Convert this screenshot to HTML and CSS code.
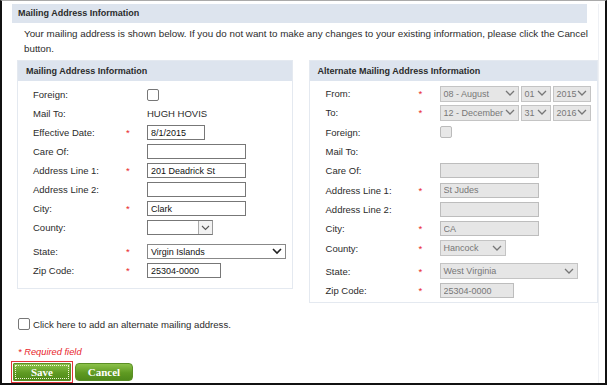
FILE: index.html
```html
<!DOCTYPE html>
<html lang="en">
<head>
  <meta charset="UTF-8">
  <title>Mailing Address Information</title>
  <link rel="stylesheet" href="styles.css">
</head>
<body>
  <div class="frame">
    <div class="page">
      <h2 class="page-title">Mailing Address Information</h2>
      <p class="intro">Your mailing address is shown below. If you do not want to make any changes to your existing information, please click the Cancel button.</p>

      <div class="panels">
        <section class="panel panel-main">
          <h3 class="panel-title">Mailing Address Information</h3>
          <div class="rows">
            <div class="row"><span class="label">Foreign:</span><span class="req"></span><span class="field"><span class="check"></span></span></div>
            <div class="row"><span class="label">Mail To:</span><span class="req"></span><span class="field value">HUGH HOVIS</span></div>
            <div class="row"><span class="label">Effective Date:</span><span class="req">*</span><span class="field"><input class="input w-date" value="8/1/2015"></span></div>
            <div class="row"><span class="label">Care Of:</span><span class="req"></span><span class="field"><input class="input w-long"></span></div>
            <div class="row"><span class="label">Address Line 1:</span><span class="req">*</span><span class="field"><input class="input w-long" value="201 Deadrick St"></span></div>
            <div class="row"><span class="label">Address Line 2:</span><span class="req"></span><span class="field"><input class="input w-long"></span></div>
            <div class="row"><span class="label">City:</span><span class="req">*</span><span class="field"><input class="input w-long" value="Clark"></span></div>
            <div class="row row-county"><span class="label">County:</span><span class="req"></span>
              <span class="field"><span class="combo"><span class="combo-text"></span><span class="combo-btn"><svg width="9" height="6" viewBox="0 0 9 6"><path d="M1 1l3.5 3.5L8 1" fill="none" stroke="#555" stroke-width="1.1"/></svg></span></span></span>
            </div>
            <div class="row"><span class="label">State:</span><span class="req">*</span>
              <span class="field"><span class="select w-state"><span>Virgin Islands</span><svg width="10" height="7" viewBox="0 0 10 7"><path d="M1 1l4 4 4-4" fill="none" stroke="#222" stroke-width="1.6"/></svg></span></span>
            </div>
            <div class="row"><span class="label">Zip Code:</span><span class="req">*</span><span class="field"><input class="input w-zip" value="25304-0000"></span></div>
          </div>
        </section>

        <section class="panel panel-alt">
          <h3 class="panel-title">Alternate Mailing Address Information</h3>
          <div class="rows">
            <div class="row"><span class="label">From:</span><span class="req">*</span>
              <span class="field dates">
                <span class="select off w-month"><span>08 - August</span><svg width="10" height="7" viewBox="0 0 10 7"><path d="M1 1l4 4 4-4" fill="none" stroke="#777" stroke-width="1.3"/></svg></span>
                <span class="select off w-day"><span>01</span><svg width="10" height="7" viewBox="0 0 10 7"><path d="M1 1l4 4 4-4" fill="none" stroke="#777" stroke-width="1.3"/></svg></span>
                <span class="select off w-year"><span>2015</span><svg width="10" height="7" viewBox="0 0 10 7"><path d="M1 1l4 4 4-4" fill="none" stroke="#777" stroke-width="1.3"/></svg></span>
              </span>
            </div>
            <div class="row"><span class="label">To:</span><span class="req">*</span>
              <span class="field dates">
                <span class="select off w-month"><span>12 - December</span><svg width="10" height="7" viewBox="0 0 10 7"><path d="M1 1l4 4 4-4" fill="none" stroke="#777" stroke-width="1.3"/></svg></span>
                <span class="select off w-day"><span>31</span><svg width="10" height="7" viewBox="0 0 10 7"><path d="M1 1l4 4 4-4" fill="none" stroke="#777" stroke-width="1.3"/></svg></span>
                <span class="select off w-year"><span>2016</span><svg width="10" height="7" viewBox="0 0 10 7"><path d="M1 1l4 4 4-4" fill="none" stroke="#777" stroke-width="1.3"/></svg></span>
              </span>
            </div>
            <div class="row"><span class="label">Foreign:</span><span class="req"></span><span class="field"><span class="check off"></span></span></div>
            <div class="row"><span class="label">Mail To:</span><span class="req"></span><span class="field"></span></div>
            <div class="row"><span class="label">Care Of:</span><span class="req"></span><span class="field"><input class="input off w-long" disabled></span></div>
            <div class="row"><span class="label">Address Line 1:</span><span class="req">*</span><span class="field"><input class="input off w-long" value="St Judes" disabled></span></div>
            <div class="row"><span class="label">Address Line 2:</span><span class="req"></span><span class="field"><input class="input off w-long" disabled></span></div>
            <div class="row"><span class="label">City:</span><span class="req">*</span><span class="field"><input class="input off w-long" value="CA" disabled></span></div>
            <div class="row row-county"><span class="label">County:</span><span class="req">*</span>
              <span class="field"><span class="select off w-county"><span>Hancock</span><svg width="10" height="7" viewBox="0 0 10 7"><path d="M1 1l4 4 4-4" fill="none" stroke="#777" stroke-width="1.3"/></svg></span></span>
            </div>
            <div class="row"><span class="label">State:</span><span class="req">*</span>
              <span class="field"><span class="select off w-state2"><span>West Virginia</span><svg width="10" height="7" viewBox="0 0 10 7"><path d="M1 1l4 4 4-4" fill="none" stroke="#777" stroke-width="1.3"/></svg></span></span>
            </div>
            <div class="row"><span class="label">Zip Code:</span><span class="req">*</span><span class="field"><input class="input off w-zip" value="25304-0000" disabled></span></div>
          </div>
        </section>
      </div>

      <label class="add-alt"><span class="check"></span>Click here to add an alternate mailing address.</label>

      <p class="required">* Required field</p>

      <div class="actions">
        <span class="focus-ring"><button class="btn btn-focus">Save</button></span>
        <button class="btn">Cancel</button>
      </div>
    </div>
  </div>
</body>
</html>
```

FILE: styles.css
```css
html, body {
  margin: 0;
  padding: 0;
  background: #fff;
}

body {
  font-family: "Liberation Sans", Arial, sans-serif;
  font-size: 9.5px;
  color: #2b2b2b;
}

.frame {
  width: 607px;
  height: 385px;
  border-left: 2px solid #111;
  border-right: 2px solid #111;
  border-bottom: 2px solid #111;
  border-top: 1px solid #aaa;
  box-sizing: border-box;
  overflow: hidden;
}

.page {
  margin: 3px 6px 0 10px;
  border-right: 1px solid #eef0f4;
  height: 100%;
}

.page-title {
  margin: 0;
  width: 575px;
  height: 19px;
  line-height: 19px;
  background: #dde4ee;
  padding-left: 6px;
  box-sizing: border-box;
  font-size: 9px;
  font-weight: bold;
  color: #2b2b2b;
}

.intro {
  margin: 3px 0 0 12px;
  width: 570px;
  font-size: 9.8px;
  line-height: 15px;
}

.panels {
  display: flex;
  align-items: flex-start;
  gap: 16px;
  margin: 4px 0 0 5px;
}

.panel {
  border: 1px solid #e4e9f0;
  box-sizing: border-box;
}

.panel-main {
  width: 276px;
  height: 229px;
}

.panel-alt {
  width: 290px;
  height: 243px;
}

.panel-title {
  margin: 0;
  height: 20px;
  line-height: 20px;
  background: #dde4ee;
  padding-left: 8px;
  font-size: 9px;
  font-weight: bold;
  color: #2b2b2b;
}

.rows {
  padding: 4px 0 0 15px;
}

.panel-alt .rows {
  padding-top: 3px;
  padding-left: 16px;
}

.row {
  display: grid;
  grid-template-columns: 93px 21px 1fr;
  align-items: center;
  height: 19px;
  white-space: nowrap;
}

.panel-alt .row {
  height: 19.3px;
}

.row-county {
  margin-bottom: 5px;
}

.panel-alt .row-county {
  margin-bottom: 4px;
}

.req {
  color: #e8252b;
}

.field {
  display: flex;
  align-items: center;
}

.check {
  display: inline-block;
  width: 10px;
  height: 10px;
  border: 1px solid #777;
  border-radius: 2px;
  background: #fff;
}

.check.off {
  border-color: #bbb;
  background: #e8e8e8;
}

.input {
  height: 15px;
  border: 1px solid #777;
  box-sizing: border-box;
  padding: 0 3px;
  font-family: "Liberation Sans", Arial, sans-serif;
  font-size: 9px;
  color: #111;
  background: #fff;
  margin: 0;
}

.input.off {
  background: #e6e6e6;
  border-color: #bdbdbd;
  color: #777;
}

.w-date { width: 58px; }
.w-long { width: 99px; }
.w-zip { width: 74px; }

.combo {
  display: flex;
  width: 66px;
  height: 15px;
  border: 1px solid #777;
  border-right-color: #999;
  box-sizing: border-box;
}

.combo-text {
  flex: 1;
}

.combo-btn {
  width: 13px;
  border-left: 1px solid #aaa;
  background: #f2f2f2;
  display: flex;
  align-items: center;
  justify-content: center;
}

.select {
  display: flex;
  align-items: center;
  justify-content: space-between;
  height: 15px;
  border: 1px solid #888;
  box-sizing: border-box;
  padding: 0 3px;
  font-size: 9px;
  color: #111;
  background: #fff;
}

.select.off {
  background: #e6e6e6;
  border-color: #c4c4c4;
  color: #777;
  height: 16px;
}

.dates {
  gap: 2px;
}

.w-state { width: 139px; }
.w-month { width: 79px; }
.w-day { width: 30px; }
.w-year { width: 38px; }
.w-county { width: 66px; }
.w-state2 { width: 138px; }

.add-alt {
  display: flex;
  align-items: center;
  gap: 3px;
  margin: 15px 0 0 6px;
  font-size: 9.6px;
}

.required {
  margin: 17px 0 0 6px;
  color: #e8252b;
  font-style: italic;
  font-size: 9.3px;
}

.actions {
  display: flex;
  align-items: center;
  gap: 2px;
  margin: 4px 0 0 -1px;
}

.focus-ring {
  border: 1px solid #e0333a;
  padding: 1px;
  display: flex;
}

.btn {
  width: 58px;
  height: 18px;
  border: 1px solid #5b8f25;
  border-radius: 4px;
  background: linear-gradient(#8cc24a, #5f9a22 55%, #4f8a1a);
  color: #fff;
  font-family: "Liberation Serif", "Times New Roman", serif;
  font-weight: bold;
  font-size: 11px;
  padding: 0;
  line-height: 16px;
}

.btn-focus {
  border-radius: 1px;
  outline: 1px dotted #f4f4d8;
  outline-offset: -3px;
}
```
